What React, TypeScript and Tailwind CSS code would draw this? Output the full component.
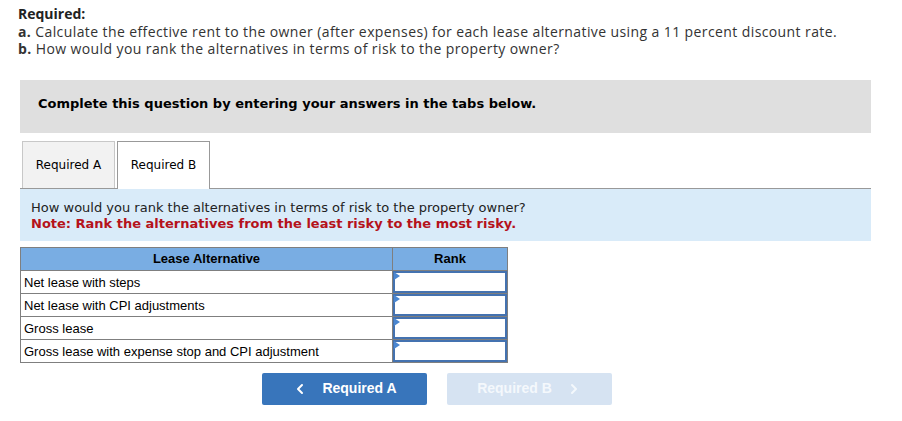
import { ChevronLeft, ChevronRight } from 'lucide-react'

const rows = [
  'Net lease with steps',
  'Net lease with CPI adjustments',
  'Gross lease',
  'Gross lease with expense stop and CPI adjustment',
]

function RankCell() {
  return (
    <td className="border border-[#7f7f7f] p-0 h-[23px]">
      <div className="relative h-[22px] border-2 border-[#4472b0]">
        <span className="absolute -left-px -top-px w-0 h-0 border-y-[4px] border-y-transparent border-l-[6px] border-l-[#4a86d0]" />
      </div>
    </td>
  )
}

export default function App() {
  return (
    <div className="w-[902px] h-[421px] bg-white pt-[5px]">
      {/* Instructions */}
      <div className="pl-[18px] text-[14px] leading-[17.5px] tracking-[0.4px] text-[#333] font-['Open_Sans',Arial,sans-serif]">
        <p className="font-bold text-[#222] tracking-normal">Required:</p>
        <p>
          <b>a.</b> Calculate the effective rent to the owner (after expenses) for each lease alternative using a 11 percent discount rate.
        </p>
        <p>
          <b>b.</b> How would you rank the alternatives in terms of risk to the property owner?
        </p>
      </div>

      <div className="ml-[20px] w-[851px] mt-[22px] h-[53px] bg-[#dfdfdf] pl-[18px] pt-[14px] text-[13px] font-bold text-black font-['DejaVu_Sans',Verdana,sans-serif]">
        Complete this question by entering your answers in the tabs below.
      </div>

      {/* Tabs */}
      <div className="ml-[20px] w-[851px] mt-[8px] flex items-end border-b border-[#999] h-[48px]">
        <div className="ml-[2px] w-[93px] h-[47px] bg-[#f2f2f2] border border-b-0 border-[#c8c8c8] flex items-center justify-center text-[12px] text-black font-['DejaVu_Sans',Verdana,sans-serif]">
          Required A
        </div>
        <div className="ml-[2px] w-[93px] h-[48px] -mb-px bg-white border border-b-0 border-[#999] flex items-center justify-center text-[12px] text-black font-['DejaVu_Sans',Verdana,sans-serif]">
          Required B
        </div>
      </div>

      <div className="ml-[20px] w-[851px] h-[52px] bg-[#d9ebf9] pl-[11px] pt-[11px] text-[13px] leading-[16px] font-['DejaVu_Sans',Verdana,sans-serif]">
        <p className="text-[#222]">How would you rank the alternatives in terms of risk to the property owner?</p>
        <p className="font-bold text-[#b5121b]">Note: Rank the alternatives from the least risky to the most risky.</p>
      </div>

      {/* Table */}
      <table className="ml-[20px] mt-[6px] w-[488px] border-collapse text-[13px] font-['Liberation_Sans',Arial,sans-serif] text-black">
        <thead>
          <tr className="bg-[#79ade3] h-[23px]">
            <th className="border border-[#7f7f7f] font-bold w-[372px] pt-[1px]">Lease Alternative</th>
            <th className="border border-[#7f7f7f] font-bold pt-[1px]">Rank</th>
          </tr>
        </thead>
        <tbody>
          {rows.map((r) => (
            <tr key={r} className="h-[23px]">
              <td className="border border-[#7f7f7f] pl-[3px] pt-[2px] leading-[18px]">{r}</td>
              <RankCell />
            </tr>
          ))}
        </tbody>
      </table>

      {/* Nav buttons */}
      <div className="mt-[10px] flex gap-[20px] pl-[262px]">
        <button className="w-[165px] h-[32px] rounded-[2px] bg-[#3875bb] text-white text-[14px] font-bold flex items-center justify-center gap-[14px] font-['Liberation_Sans',Arial,sans-serif]">
          <ChevronLeft className="w-[16px] h-[16px]" strokeWidth={3} />
          <span>Required A</span>
        </button>
        <button className="w-[165px] h-[32px] rounded-[2px] bg-[#d6e3f2] text-[#f4f8fc] text-[14px] font-bold flex items-center justify-center gap-[14px] font-['Liberation_Sans',Arial,sans-serif]">
          <span>Required B</span>
          <ChevronRight className="w-[16px] h-[16px]" strokeWidth={3} />
        </button>
      </div>
    </div>
  )
}
